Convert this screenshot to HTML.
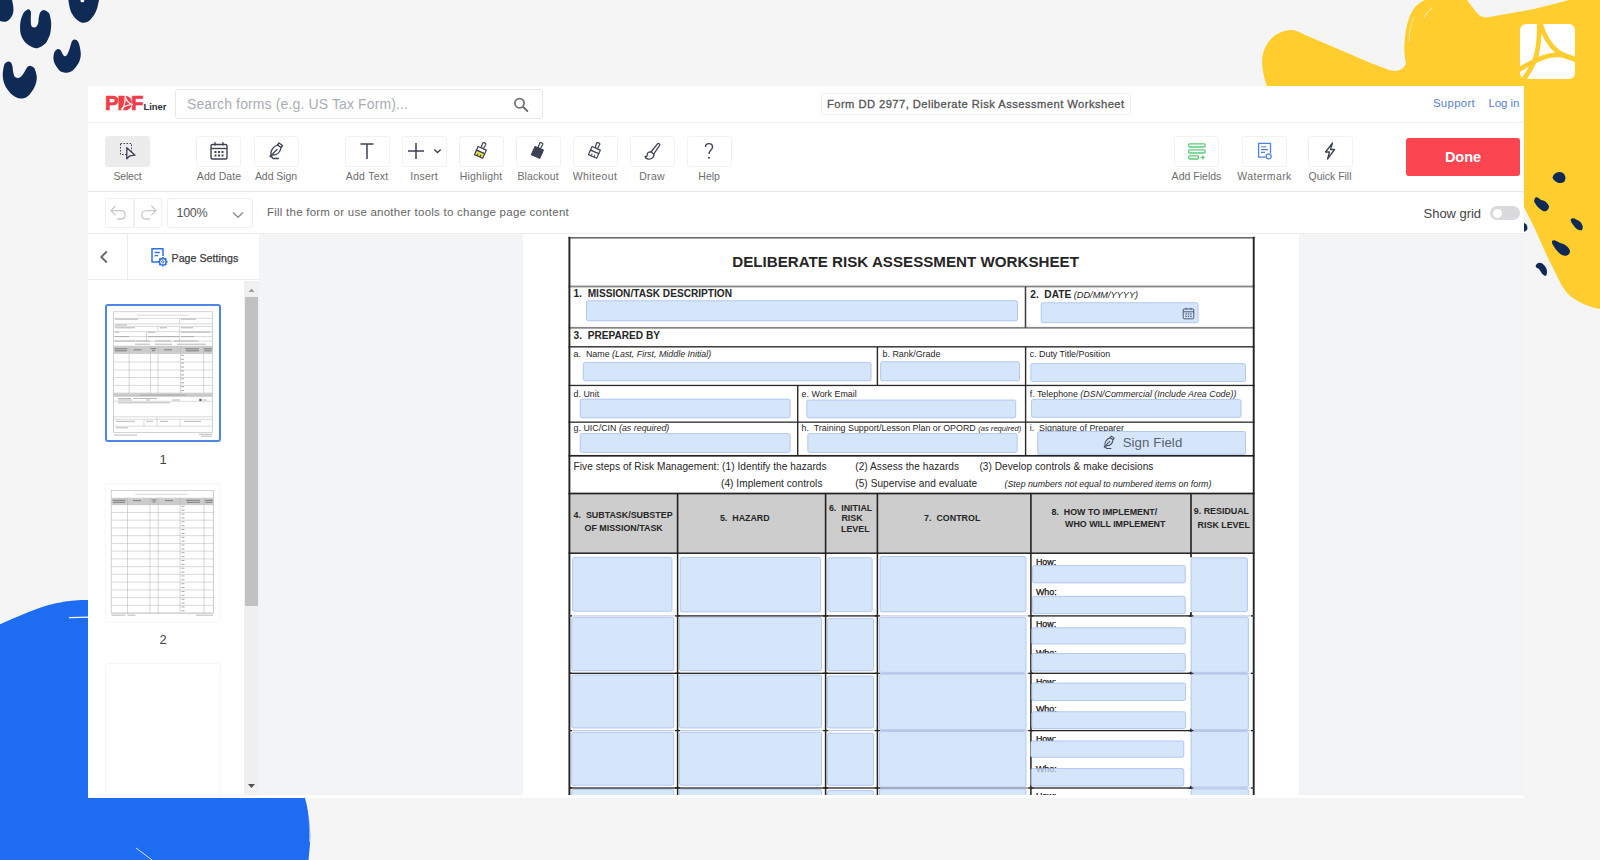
<!DOCTYPE html>
<html lang="en">
<head>
<meta charset="utf-8">
<title>Form DD 2977, Deliberate Risk Assessment Worksheet</title>
<style>
*{box-sizing:border-box;margin:0;padding:0}
html,body{width:1600px;height:860px;overflow:hidden}
body{background:#f5f5f5;font-family:"Liberation Sans",sans-serif;position:relative;color:#555}
.abs{position:absolute}
#deco{position:absolute;left:0;top:0;width:1600px;height:860px}
#app{position:absolute;left:88px;top:86px;width:1436px;height:711.500px;background:#fff;overflow:hidden}
/* header */
#hdr{position:absolute;left:0;top:0;width:1436px;height:37px;border-bottom:1px solid #f0f0f0;background:#fff}
#search{position:absolute;left:87px;top:2.500px;width:367.500px;height:30px;border:1px solid #e9e9e9;border-radius:3px;background:#fff}
#search span{position:absolute;left:11px;top:6.500px;font-size:14px;color:#a9adb4;letter-spacing:.125px;white-space:nowrap;line-height:16px}
#title{position:absolute;left:732.500px;top:6.500px;width:310.500px;height:22px;border:1px solid #efefef;border-radius:3px;font-size:11.200px;color:#555;line-height:20.500px;text-align:center;white-space:nowrap;letter-spacing:.447px;-webkit-text-stroke:.3px #555}
.lnk{position:absolute;top:10.500px;font-size:11.500px;color:#5a7fd0;white-space:nowrap;line-height:13px}
#logo{position:absolute;left:0;top:0;width:88px;height:38px}
#logo .pdf{position:absolute;left:17px;top:5.800px;font-size:20.500px;font-weight:bold;color:#ee3e4a;letter-spacing:-1.200px;line-height:22px;-webkit-text-stroke:.7px #ee3e4a}
#logo .dfill{position:absolute;left:32px;top:12px;width:10.500px;height:11px;background:#ee3e4a;border-radius:0 6px 6px 0}
#logo .liner{position:absolute;left:55.500px;top:14.500px;font-size:9.500px;font-weight:bold;color:#2e3240;line-height:12px;letter-spacing:-.1px}
/* toolbar */
#tb{position:absolute;left:0;top:37px;width:1436px;height:69px;border-bottom:1px solid #e8e8e8;background:#fff}
.btn{position:absolute;top:12.500px;width:45px;height:31px;border:1px solid #f2f2f2;border-radius:3px;background:#fff}
.btn.sel{background:#ececed;border-color:#ececed}
.btn svg{position:absolute;left:50%;top:50%;transform:translate(-50%,-50%)}
.lbl{position:absolute;top:47px;width:80px;margin-left:-40px;text-align:center;font-size:10.500px;color:#6d6d6d;white-space:nowrap;letter-spacing:-.12px;line-height:13px}
#done{position:absolute;left:1318px;top:15.400px;width:114px;height:38px;background:#fb4551;border-radius:3px;color:#fff;font-weight:bold;font-size:14.500px;text-align:center;line-height:38px}
/* row3 */
#r3{position:absolute;left:0;top:106px;width:1436px;height:42px;background:#fff;border-bottom:1px solid #ededed}
.ub{position:absolute;top:6px;height:30px;border:1px solid #efefef;background:#fff}
/* body */
#main{position:absolute;left:0;top:148px;width:1436px;height:560.500px;background:#f3f4f6}
#side{position:absolute;left:0;top:0;width:171px;height:560.500px;background:#fff}
#page{position:absolute;left:435px;top:0;width:776px;height:560.500px;background:#fff}
#page{overflow:hidden}
.ln{position:absolute}
.fld{position:absolute;background:rgba(200,222,250,.76);border:1px solid rgba(150,175,232,.62);border-radius:2px}
.t{position:absolute;white-space:nowrap;color:#262626;line-height:0;transform:translateY(-.3465em);font-family:"Liberation Sans",sans-serif}
.t.b{font-weight:bold}
.t i{font-style:italic}
.t.hw{color:#111;-webkit-text-stroke:.25px #111}
.sf{position:absolute;left:85.500px;top:3px;font-size:13.200px;color:#5a6270;letter-spacing:.1px;line-height:17px;white-space:nowrap}
.pn{width:116px;text-align:center;font-size:13px;color:#444;line-height:15px}
#side{overflow:hidden}
</style>
</head>
<body>
<svg id="deco" viewBox="0 0 1600 860">
  <!-- yellow blob -->
  <path fill="#ffcd2d" d="M1267.500 87 C1264 79 1261.500 68 1262.300 58 C1262.800 53 1264.300 49 1266 46 C1272 35 1281 31 1290 30 C1296 30 1299 32 1303 34 L1338 49 L1373 64 C1382 67 1388 70 1394 71 C1400 71 1405 68 1406 63 C1404 54 1404 46 1405 38 C1406 28 1408 18 1413 10 C1416 5 1420 2 1425 0 L1467 0 C1470 4 1473 8 1476 12 C1479 15 1481 17 1485 17.5 C1489 17.5 1500 15 1512 13 L1534 9 C1546 6 1558 3 1569 0 L1600 0 L1600 309 C1590 307 1580 303 1573 298 C1567 294 1564 289 1561 284 L1547 256 L1535 229 L1524 207 L1524 87 Z"/>
  <path fill="none" stroke="#fff" stroke-width="1" stroke-linecap="round" opacity=".8" d="M1424 17 C1427 13 1429 10 1432 8"/>
  <path fill="none" stroke="#fff" stroke-width=".8" stroke-linecap="round" opacity=".6" d="M1409 42 C1409 32 1411 24 1414 17"/>
  <!-- logo -->
  <rect x="1520" y="24" width="55" height="55" rx="6" fill="#fff"/>
  <g fill="none" stroke="#ffcd2d" stroke-width="4.700">
    <path d="M1539.300 22 C1539.500 40 1538.500 52 1534 62 C1531 69 1527 75 1522 82"/>
    <path d="M1539.800 22 C1544 36 1550 46 1558 52 C1564 56 1570 58 1578 60"/>
    <path d="M1518 70.500 C1527 64.500 1538 58.500 1550 55.500 C1560 53.500 1568 55.500 1578 61"/>
  </g>
  <!-- navy dots right -->
  <g fill="#0f2a54">
    <path d="M1553 176 C1555 172 1560 171 1563 173 C1566 175 1566 180 1564 182 C1561 184 1557 183 1555 181 C1553 179 1552 178 1553 176 Z"/>
    <path d="M1535 198 C1537 196 1539 198 1541 200 C1544 200 1547 202 1549 206 C1549 210 1546 212 1543 211 C1539 209 1535 204 1534 201 Z"/>
    <path d="M1571 219 C1573 217 1576 219 1579 221 C1582 223 1584 227 1582 230 C1579 231 1576 229 1574 226 C1572 223 1570 221 1571 219 Z"/>
    <path d="M1552 241 C1554 239 1557 241 1560 243 C1565 244 1569 247 1570 251 C1570 255 1566 257 1562 255 C1558 253 1553 246 1552 243 Z"/>
    <path d="M1536 265 C1538 262 1541 262 1544 265 C1547 268 1548 272 1546 276 C1543 276 1541 272 1539 269 C1537 268 1535 267 1536 265 Z"/>
    <path d="M1524 223 C1527 224 1528 227 1527 230 L1524 232 Z"/>
  </g>
  <!-- navy U shapes top-left -->
  <g fill="#0f2a54">
    <path d="M-6.0 -6.0 C-3.1 -10.2 8.5 -7.0 11.5 -6.0 C14.5 -5.0 11.8 -2.3 12.1 0.0 C12.4 2.3 13.3 5.4 13.4 7.7 C13.5 10.0 13.4 12.1 12.8 14.0 C12.2 15.9 10.9 17.9 9.6 19.2 C8.3 20.5 6.7 21.4 5.1 21.7 C3.5 22.0 1.8 21.6 0.0 21.1 C-1.8 20.7 -5.0 23.5 -6.0 19.0 C-7.0 14.5 -8.9 -1.8 -6.0 -6.0 Z"/>
    <path d="M27.5 9.6 C26.3 10.2 24.2 11.8 23.0 14.0 C21.8 16.2 20.7 19.8 20.3 23.0 C19.9 26.2 20.0 30.2 20.5 33.0 C21.0 35.8 22.2 38.0 23.5 40.0 C24.8 42.0 26.4 43.5 28.0 44.8 C29.6 46.0 31.3 47.0 33.0 47.5 C34.7 48.0 35.9 48.7 38.0 48.0 C40.1 47.3 43.6 45.3 45.4 43.5 C47.2 41.7 48.1 38.9 49.0 37.0 C49.9 35.1 50.1 34.3 50.5 32.0 C50.9 29.7 51.3 25.7 51.2 23.0 C51.1 20.3 50.4 17.7 50.0 16.0 C49.6 14.3 49.6 13.8 48.6 12.8 C47.6 11.8 45.4 10.2 44.1 10.0 C42.8 9.8 41.8 10.8 41.0 11.5 C40.2 12.2 40.0 12.8 39.6 14.0 C39.2 15.2 38.8 17.5 38.6 19.0 C38.4 20.5 38.6 21.8 38.2 23.0 C37.9 24.2 37.1 25.8 36.5 26.5 C35.9 27.2 35.2 27.4 34.5 27.5 C33.8 27.6 32.6 27.4 32.0 26.8 C31.4 26.2 31.2 25.5 31.0 24.0 C30.8 22.5 30.8 19.9 30.8 18.0 C30.8 16.1 31.1 14.1 31.0 12.8 C30.9 11.5 30.6 10.7 30.0 10.2 C29.4 9.7 28.7 9.0 27.5 9.6 Z"/>
    <path d="M69.0 -6.0 C67.3 -3.7 69.0 4.0 69.7 7.7 C70.5 11.4 71.9 13.7 73.5 16.0 C75.1 18.3 77.6 20.4 79.3 21.5 C81.0 22.6 82.1 23.0 83.8 22.8 C85.5 22.6 87.6 22.2 89.5 20.5 C91.4 18.8 93.8 15.6 95.3 12.8 C96.8 10.0 97.7 6.9 98.2 3.8 C98.7 0.7 100.8 -4.4 98.5 -6.0 C96.2 -7.6 86.9 -7.2 84.5 -6.0 C82.1 -4.8 84.5 -0.4 84.2 1.0 C83.9 2.4 83.1 2.2 82.5 2.2 C81.9 2.2 80.9 2.4 80.5 1.0 C80.1 -0.4 81.9 -4.8 80.0 -6.0 C78.1 -7.2 70.7 -8.3 69.0 -6.0 Z"/>
    <path d="M57.5 49.2 C56.7 49.5 55.5 50.3 54.8 51.5 C54.1 52.7 53.6 54.4 53.5 56.3 C53.4 58.2 53.4 60.5 54.3 62.7 C55.2 64.9 57.5 68.2 58.8 69.7 C60.1 71.2 60.7 71.5 62.0 72.0 C63.3 72.5 65.2 72.8 66.5 72.8 C67.8 72.8 68.7 72.6 70.0 72.0 C71.3 71.4 72.7 70.8 74.2 69.0 C75.8 67.2 78.2 63.9 79.3 61.4 C80.4 58.9 80.8 56.5 80.8 53.7 C80.8 50.9 79.8 46.9 79.3 44.8 C78.8 42.7 78.2 41.9 77.5 41.0 C76.8 40.1 75.6 39.7 74.8 39.6 C74.0 39.5 73.1 39.9 72.5 40.5 C71.9 41.1 71.8 41.6 71.3 43.0 C70.8 44.4 70.2 46.9 69.7 48.6 C69.2 50.3 68.5 51.9 68.0 53.0 C67.5 54.1 67.1 55.0 66.5 55.5 C65.9 56.0 65.2 56.5 64.6 56.3 C64.0 56.1 63.3 55.3 62.8 54.5 C62.3 53.7 61.9 52.3 61.4 51.5 C60.9 50.7 60.4 50.0 59.8 49.6 C59.1 49.2 58.3 48.9 57.5 49.2 Z"/>
    <path d="M8.3 61.4 C7.4 61.5 6.2 62.1 5.5 63.0 C4.8 63.9 4.2 64.2 3.8 66.5 C3.3 68.8 2.5 73.3 2.8 76.7 C3.1 80.1 4.1 83.9 5.8 87.0 C7.5 90.1 10.4 93.4 12.8 95.3 C15.2 97.2 17.9 98.4 20.5 98.5 C23.1 98.6 25.8 97.8 28.1 95.9 C30.4 94.0 33.0 90.0 34.5 87.0 C36.0 84.0 36.7 80.8 36.8 78.0 C36.9 75.2 35.8 72.1 35.2 70.3 C34.7 68.5 34.2 68.0 33.5 67.3 C32.8 66.6 31.5 66.1 30.7 65.9 C29.9 65.7 29.1 66.0 28.5 66.3 C27.9 66.6 27.8 66.5 26.9 67.8 C26.0 69.1 24.1 72.7 23.0 74.2 C21.9 75.7 21.4 76.4 20.5 77.0 C19.6 77.6 18.7 78.0 17.9 78.0 C17.1 78.0 16.1 77.7 15.5 77.3 C14.9 76.9 14.5 76.5 14.1 75.4 C13.7 74.4 13.3 72.5 13.0 71.0 C12.7 69.5 12.8 67.9 12.5 66.5 C12.2 65.1 11.6 63.4 10.9 62.5 C10.2 61.6 9.2 61.3 8.3 61.4 Z"/>
  </g>
  <!-- blue blob bottom-left -->
  <path fill="#1d6cf2" d="M0 624.200 C6 621.700 12 619 18.600 616.300 C25 613.600 31 611 37.200 608.800 C43 606.600 49 604.700 55.800 603.300 C62 602 68 601 74.400 600.500 C79 600.100 84 600 90 600 L300 600 L305 798 C309 812 311 828 310 844 L308.500 860 L0 860 Z"/>
  <path fill="none" stroke="#fff" stroke-width="1.200" stroke-linecap="round" d="M69.500 617.700 C76 617.400 82 617.200 89 617.200"/>
  <path fill="none" stroke="#fff" stroke-width=".9" opacity=".9" d="M136 848 L152 860"/>
  <path fill="none" stroke="#fff" stroke-width=".7" opacity=".7" d="M306.500 798 C309 812 310 826 309.500 842"/>
</svg>
<div id="app">
  <div id="hdr">
    <div id="logo"><div class="dfill"></div><span class="pdf">PDF</span><svg class="abs" style="left:29.500px;top:8.500px" width="18" height="17" viewBox="0 0 18 17"><g fill="none" stroke="#fff" stroke-width="1.100"><path d="M7.200 0 C7.500 5 7 10 4 16"/><path d="M7.200 2 C8.500 6 11 8.500 14.500 9.500"/><path d="M3 14.500 C6 11 10 9.500 15 9.800"/></g></svg><span class="liner">Liner</span></div>
    <div id="search"><span>Search forms (e.g. US Tax Form)...</span><svg class="abs" style="left:334px;top:4px" width="22" height="22" viewBox="0 0 22 22"><circle cx="9.500" cy="9.200" r="4.600" fill="none" stroke="#6f7378" stroke-width="1.800"/><path d="M13 12.700 L17.300 17" stroke="#6f7378" stroke-width="2" stroke-linecap="round"/></svg></div>
    <div id="title">Form DD 2977, Deliberate Risk Assessment Worksheet</div>
    <span class="lnk" style="left:1344.900px;letter-spacing:.27px">Support</span>
    <span class="lnk" style="left:1400.400px;letter-spacing:-.05px">Log in</span>
  </div>
  <div id="tb">
    <div class="btn sel" style="left:17px"><svg width="22" height="22" viewBox="0 0 22 22"><rect x="3.500" y="3.500" width="11" height="11" fill="none" stroke="#3d4254" stroke-width="1" stroke-dasharray="1.500 1.500"/><path d="M9.800 7.800 L9.800 18.800 L12.800 15.800 L18 15.200 Z" fill="#ececed" stroke="#3d4254" stroke-width="1.300" stroke-linejoin="round"/></svg></div><div class="lbl" style="left:39.5px;letter-spacing:-0.198px">Select</div>
    <div class="btn " style="left:108px"><svg width="20" height="20" viewBox="0 0 20 20"><rect x="2" y="3.500" width="16" height="14.500" rx="1.500" fill="none" stroke="#3d4254" stroke-width="1.400"/><path d="M2 7.500 H18" stroke="#3d4254" stroke-width="1.400"/><path d="M6 1.800 V4 M14 1.800 V4" stroke="#3d4254" stroke-width="1.400" stroke-linecap="round"/><g fill="#3d4254"><rect x="5.500" y="10" width="2" height="2"/><rect x="9" y="10" width="2" height="2"/><rect x="12.500" y="10" width="2" height="2"/><rect x="5.500" y="13.500" width="2" height="2"/><rect x="9" y="13.500" width="2" height="2"/><rect x="12.500" y="13.500" width="2" height="2"/></g></svg></div><div class="lbl" style="left:131.0px;letter-spacing:0.074px">Add Date</div>
    <div class="btn " style="left:165.5px"><svg width="20" height="20" viewBox="0 0 20 20"><g fill="none" stroke="#3d4254" stroke-width="1.300" stroke-linecap="round" stroke-linejoin="round"><path d="M5 14.500 C4 10 7 5.500 11.500 4 L15 6.500 C14.500 11 11 14 6.500 14.200"/><path d="M11.500 4 L13 2 L16.500 4.500 L15 6.500"/><path d="M4 15.500 L11 8.500"/><path d="M4.500 15.500 C6 15.500 6.500 16.500 7 17.500 L12.500 17.500"/></g></svg></div><div class="lbl" style="left:188.0px;letter-spacing:-0.061px">Add Sign</div>
    <div class="btn " style="left:256.6px"><svg width="20" height="20" viewBox="0 0 20 20"><path d="M3.500 3 H16.500 M10 3 V18" fill="none" stroke="#3d4254" stroke-width="1.500"/></svg></div><div class="lbl" style="left:279.1px;letter-spacing:0.275px">Add Text</div>
    <div class="btn " style="left:313.6px"><svg width="36" height="20" viewBox="0 0 36 20"><path d="M2 10 H18 M10 2 V18" fill="none" stroke="#3d4254" stroke-width="1.500"/><path d="M28.300 8.500 L31.500 11.500 L34.700 8.500" fill="none" stroke="#3d4254" stroke-width="1.400"/></svg></div><div class="lbl" style="left:336.1px;letter-spacing:0.247px">Insert</div>
    <div class="btn " style="left:370.6px"><svg width="20" height="20" viewBox="0 0 20 20"><g transform="rotate(24 10 10)"><path d="M8.300 1.800 C8.300 0.900 11.700 0.900 11.700 1.800 L11.300 7 H8.700 Z" fill="#fff" stroke="#3d4254" stroke-width="1.200" stroke-linejoin="round"/><path d="M5.500 7 H14.500 V11 H5.500 Z" fill="#fff" stroke="#3d4254" stroke-width="1.200" stroke-linejoin="round"/><path d="M5.500 11 H14.500 V16 H5.500 Z" fill="#e4e04a" stroke="#3d4254" stroke-width="1.200" stroke-linejoin="round"/><path d="M8.500 16 V13.500 M11.500 16 V13.500" stroke="#3d4254" stroke-width="1"/></g></svg></div><div class="lbl" style="left:393.1px;letter-spacing:0.218px">Highlight</div>
    <div class="btn " style="left:427.6px"><svg width="20" height="20" viewBox="0 0 20 20"><g transform="rotate(24 10 10)"><path d="M8.300 1.800 C8.300 0.900 11.700 0.900 11.700 1.800 L11.300 7 H8.700 Z" fill="#fff" stroke="#3d4254" stroke-width="1.200" stroke-linejoin="round"/><path d="M5.500 7 H14.500 V11 H5.500 Z" fill="#3d4254" stroke="#3d4254" stroke-width="1.200" stroke-linejoin="round"/><path d="M5.500 11 H14.500 V16 H5.500 Z" fill="#3d4254" stroke="#3d4254" stroke-width="1.200" stroke-linejoin="round"/></g></svg></div><div class="lbl" style="left:450.1px;letter-spacing:0.138px">Blackout</div>
    <div class="btn " style="left:484.6px"><svg width="20" height="20" viewBox="0 0 20 20"><g transform="rotate(24 10 10)"><path d="M8.300 1.800 C8.300 0.900 11.700 0.900 11.700 1.800 L11.300 7 H8.700 Z" fill="#fff" stroke="#3d4254" stroke-width="1.200" stroke-linejoin="round"/><path d="M5.500 7 H14.500 V11 H5.500 Z" fill="#fff" stroke="#3d4254" stroke-width="1.200" stroke-linejoin="round"/><path d="M5.500 11 H14.500 V16 H5.500 Z" fill="#fff" stroke="#3d4254" stroke-width="1.200" stroke-linejoin="round"/><path d="M8.500 16 V13.500 M11.500 16 V13.500" stroke="#3d4254" stroke-width="1"/></g></svg></div><div class="lbl" style="left:507.1px;letter-spacing:0.402px">Whiteout</div>
    <div class="btn " style="left:541.6px"><svg width="20" height="20" viewBox="0 0 20 20"><g fill="none" stroke="#3d4254" stroke-width="1.300" stroke-linecap="round" stroke-linejoin="round"><path d="M9 11 L15.500 2.800 C16.500 1.800 18.300 3 17.600 4.300 L11.800 13 "/><path d="M9 11 C7 10.500 5 12 5.200 14 C5.300 15.500 4 16 3 15.300 C3.500 18 7 19 9.500 17.500 C11.500 16.300 12.300 14.500 11.800 13 Z"/></g></svg></div><div class="lbl" style="left:564.1px;letter-spacing:0.328px">Draw</div>
    <div class="btn " style="left:598.6px"><svg width="20" height="20" viewBox="0 0 20 20"><path d="M6.500 6 C6.500 1.500 13.500 1.500 13.500 6 C13.500 9 10 9 10 13" fill="none" stroke="#3d4254" stroke-width="1.400"/><circle cx="10" cy="16.800" r="1" fill="#3d4254"/></svg></div><div class="lbl" style="left:621.1px;letter-spacing:-0.003px">Help</div>
    <div class="btn " style="left:1086px"><svg width="20" height="20" viewBox="0 0 20 20"><g fill="none" stroke="#5ec97a" stroke-width="1.300"><rect x="1.800" y="2.800" width="16.200" height="3.200" rx=".800"/><rect x="1.800" y="8.800" width="16.200" height="3.200" rx=".800"/><rect x="1.800" y="14.800" width="9.600" height="3.200" rx=".800"/><path d="M13.800 16.400 H17.800 M15.800 14.400 V18.400"/></g></svg></div><div class="lbl" style="left:1108.5px;letter-spacing:0.016px">Add Fields</div>
    <div class="btn " style="left:1154px"><svg width="20" height="20" viewBox="0 0 20 20"><g fill="none" stroke="#4f7fe0" stroke-width="1.300" stroke-linejoin="round"><path d="M10.800 16.200 H3.600 V2.400 H15.500 V12.300"/><path d="M6 5.800 H11.500 M6 8.600 H13 M6 11.400 H10" stroke-width="1.100"/><circle cx="13.700" cy="15.300" r="2.500" fill="#fff"/></g></svg></div><div class="lbl" style="left:1176.5px;letter-spacing:0.381px">Watermark</div>
    <div class="btn " style="left:1219.5px"><svg width="20" height="20" viewBox="0 0 20 20"><path d="M12.500 2 L5.500 11 H9.500 L7.500 18 L14.500 8.500 H10.500 Z" fill="none" stroke="#3d4254" stroke-width="1.300" stroke-linejoin="round"/></svg></div><div class="lbl" style="left:1242.0px;letter-spacing:-0.030px">Quick Fill</div>
    <div id="done">Done</div>
  </div>
  <div id="r3">
    <div class="ub" style="left:17px;width:29px;border-radius:3px 0 0 3px"><svg width="27" height="28" viewBox="0 0 27 28"><path d="M9.300 7.300 L5 11.600 L9.300 15.900 M5.300 11.600 H15 C20.600 11.600 20.600 20 15 20 H11.500" fill="none" stroke="#c9c9c9" stroke-width="1.300" stroke-linecap="round" stroke-linejoin="round"/></svg></div>
    <div class="ub" style="left:46px;width:28px;border-radius:0 3px 3px 0"><svg width="26" height="28" viewBox="0 0 26 28"><path d="M16.700 7.300 L21 11.600 L16.700 15.900 M20.700 11.600 H11 C5.400 11.600 5.400 20 11 20 H14.500" fill="none" stroke="#c9c9c9" stroke-width="1.300" stroke-linecap="round" stroke-linejoin="round"/></svg></div>
    <div class="ub" style="left:78.500px;width:86px;border-radius:3px"><span style="position:absolute;left:9px;top:7px;font-size:12.500px;color:#555;letter-spacing:-.3px;line-height:14px">100%</span><svg style="position:absolute;left:64.500px;top:11.500px" width="12" height="8" viewBox="0 0 12 8"><path d="M1 1.500 L6 6.300 L11 1.500" fill="none" stroke="#8e8e8e" stroke-width="1.400"/></svg></div>
    <span class="abs" style="left:179px;top:14px;font-size:11.500px;color:#666;white-space:nowrap;letter-spacing:.24px;line-height:13px">Fill the form or use another tools to change page content</span>
    <span class="abs" style="left:1335.600px;top:13.500px;font-size:13px;color:#444;white-space:nowrap;letter-spacing:-.04px;line-height:15px">Show grid</span>
    <div class="abs" style="left:1402px;top:14px;width:30px;height:14px;border-radius:7px;background:#d9d9de"><div class="abs" style="left:3px;top:2.500px;width:9px;height:9px;border-radius:50%;background:#fff"></div></div>
  </div>
  <div id="main">
    <div id="side">
<div class="abs" style="left:0;top:0;width:171px;height:46px;border-bottom:1px solid #ececec;background:#fff"></div>
<div class="abs" style="left:39px;top:0;width:1px;height:46px;background:#ececec"></div>
<svg class="abs" style="left:10px;top:16px" width="12" height="14" viewBox="0 0 12 14"><path d="M8.800 1.500 L3.300 7 L8.800 12.500" fill="none" stroke="#686868" stroke-width="1.900"/></svg>
<svg class="abs" style="left:61px;top:12px" width="22" height="22" viewBox="0 0 22 22"><g fill="none" stroke="#2f6fe4" stroke-width="1.500" stroke-linejoin="round"><path d="M9.500 16 H3 V2.700 H14 V10"/><path d="M5.700 6.500 H10.800 M5.700 9.700 H9" stroke-width="1.300"/><circle cx="13.800" cy="15.800" r="3.300" fill="#fff"/><circle cx="13.800" cy="15.800" r="1.100" stroke-width="1"/><path d="M13.800 11 V12.400 M13.800 19.200 V20.600 M9 15.800 H10.400 M17.200 15.800 H18.600 M10.400 12.400 L11.400 13.400 M16.200 18.200 L17.200 19.200 M17.200 12.400 L16.200 13.400 M11.400 18.200 L10.400 19.200" stroke-width="1.700"/></g></svg>
<span class="abs" style="left:83.5px;top:18px;font-size:10.600px;color:#3a3a3a;white-space:nowrap;letter-spacing:.06px;line-height:13px;-webkit-text-stroke:.25px #3a3a3a">Page Settings</span>
<div class="abs" style="left:156px;top:47px;width:15px;height:513.5px;background:#f0f0f0"></div>
<div class="abs" style="left:157px;top:63px;width:13px;height:309.29999999999995px;background:#c1c1c1"></div>
<svg class="abs" style="left:159.9px;top:53.6px" width="7" height="4.500" viewBox="0 0 7 4.500"><path d="M0 4.500 L3.500 .500 L7 4.500 Z" fill="#a0a0a0"/></svg>
<svg class="abs" style="left:159.9px;top:550.2px" width="7" height="4.500" viewBox="0 0 7 4.500"><path d="M0 0 L3.500 4 L7 0 Z" fill="#505050"/></svg>
<div class="abs" style="left:17px;top:69.5px;width:116px;height:138.500px;border:2px solid #4d86e6;border-radius:3px;background:#fff"></div>
<svg class="abs" style="left:19px;top:71px" width="112" height="135" viewBox="0 0 112 135" opacity=".85"><rect x="6.4" y="6.8" width="99.3" height="120.5" fill="none" stroke="#a8a8a8" stroke-width=".6"/><rect x="6.4" y="41.2" width="99.300" height="7.700" fill="#c4c4c4"/><rect x="6.4" y="88.3" width="99.300" height="3.500" fill="#c0c0c0"/><path d="M6.4 13.35 H105.7" stroke="#a8a8a8" stroke-width=".5"/><path d="M6.4 18.93 H105.7" stroke="#a8a8a8" stroke-width=".5"/><path d="M6.4 21.47 H105.7" stroke="#a8a8a8" stroke-width=".5"/><path d="M6.4 26.65 H105.7" stroke="#a8a8a8" stroke-width=".5"/><path d="M6.4 31.57 H105.7" stroke="#a8a8a8" stroke-width=".5"/><path d="M6.4 36.12 H105.7" stroke="#a8a8a8" stroke-width=".5"/><path d="M6.4 41.19 H105.7" stroke="#a8a8a8" stroke-width=".5"/><path d="M72.54 13.35 V18.93 M72.54 21.47 V36.12 M51.05 21.47 V26.65 M39.46 26.65 V36.12" stroke="#a8a8a8" stroke-width=".5"/><path d="M6.4 57 H105.7" stroke="#a8a8a8" stroke-width=".5"/><path d="M6.4 65 H105.7" stroke="#a8a8a8" stroke-width=".5"/><path d="M6.4 72.5 H105.7" stroke="#a8a8a8" stroke-width=".5"/><path d="M6.4 80.4 H105.7" stroke="#a8a8a8" stroke-width=".5"/><path d="M6.4 88 H105.7" stroke="#a8a8a8" stroke-width=".5"/><path d="M22.1 41.2 V88" stroke="#a8a8a8" stroke-width=".55"/><path d="M43.5 41.2 V88" stroke="#a8a8a8" stroke-width=".55"/><path d="M51.09 41.2 V88" stroke="#a8a8a8" stroke-width=".55"/><path d="M73.35 41.2 V88" stroke="#a8a8a8" stroke-width=".55"/><path d="M96.64 41.2 V88" stroke="#a8a8a8" stroke-width=".55"/><path d="M6.4 96.3 H105.7" stroke="#a8a8a8" stroke-width=".5"/><path d="M6.4 111.8 H105.7" stroke="#a8a8a8" stroke-width=".5"/><path d="M6.4 114.3 H105.7" stroke="#a8a8a8" stroke-width=".5"/><path d="M6.4 121.2 H105.7" stroke="#a8a8a8" stroke-width=".5"/><path d="M37 114.3 V121.2 M50 111.8 V121.2 M73 114.3 V121.2" stroke="#a8a8a8" stroke-width=".5"/><path d="M30 10.2 h52" stroke="#c2c2c2" stroke-width=".75"/><path d="M8 14.2 h23" stroke="#8d8d8d" stroke-width=".75"/><path d="M74 14.2 h15" stroke="#8d8d8d" stroke-width=".75"/><path d="M8 20 h12" stroke="#8d8d8d" stroke-width=".75"/><path d="M8 22.8 h20" stroke="#8d8d8d" stroke-width=".75"/><path d="M53 22.8 h7" stroke="#8d8d8d" stroke-width=".75"/><path d="M74 22.8 h12" stroke="#8d8d8d" stroke-width=".75"/><path d="M8 27.2 h4" stroke="#8d8d8d" stroke-width=".75"/><path d="M41 27.2 h7" stroke="#8d8d8d" stroke-width=".75"/><path d="M74 27.2 h29" stroke="#8d8d8d" stroke-width=".75"/><path d="M8 31.6 h14" stroke="#8d8d8d" stroke-width=".75"/><path d="M41 31.6 h31" stroke="#8d8d8d" stroke-width=".75"/><path d="M74 31.6 h13" stroke="#8d8d8d" stroke-width=".75"/><path d="M7.5 36 h21" stroke="#8d8d8d" stroke-width=".75"/><path d="M29 36 h14" stroke="#8d8d8d" stroke-width=".75"/><path d="M48 36 h16" stroke="#8d8d8d" stroke-width=".75"/><path d="M67 36 h24" stroke="#8d8d8d" stroke-width=".75"/><path d="M28 39.2 h15" stroke="#8d8d8d" stroke-width=".75"/><path d="M48 39.2 h17" stroke="#8d8d8d" stroke-width=".75"/><path d="M70 39.2 h29" stroke="#8d8d8d" stroke-width=".75"/><path d="M7.5 43.8 h13" stroke="#555" stroke-width=".85"/><path d="M8 45.8 h12" stroke="#555" stroke-width=".85"/><path d="M26.5 44.8 h8" stroke="#555" stroke-width=".85"/><path d="M44 43.6 h5" stroke="#555" stroke-width=".85"/><path d="M45 45.6 h3" stroke="#555" stroke-width=".85"/><path d="M57 44.8 h8" stroke="#555" stroke-width=".85"/><path d="M78 43.8 h14" stroke="#555" stroke-width=".85"/><path d="M79 45.8 h13" stroke="#555" stroke-width=".85"/><path d="M97 43.8 h8" stroke="#555" stroke-width=".85"/><path d="M97.5 45.8 h7" stroke="#555" stroke-width=".85"/><path d="M74 50.30 h3" stroke="#777" stroke-width=".75"/><path d="M74 54.22 h3" stroke="#777" stroke-width=".75"/><path d="M74 58.14 h3" stroke="#777" stroke-width=".75"/><path d="M74 62.06 h3" stroke="#777" stroke-width=".75"/><path d="M74 65.98 h3" stroke="#777" stroke-width=".75"/><path d="M74 69.90 h3" stroke="#777" stroke-width=".75"/><path d="M74 73.82 h3" stroke="#777" stroke-width=".75"/><path d="M74 77.74 h3" stroke="#777" stroke-width=".75"/><path d="M74 81.66 h3" stroke="#777" stroke-width=".75"/><path d="M74 85.58 h3" stroke="#777" stroke-width=".75"/><path d="M33 90 h46" stroke="#8a8a8a" stroke-width=".7"/><path d="M11 93.5 h13" stroke="#8d8d8d" stroke-width=".7"/><path d="M26 93.5 h24" stroke="#8d8d8d" stroke-width=".7"/><path d="M11 95 h14" stroke="#8d8d8d" stroke-width=".7"/><path d="M39 95 h4" stroke="#8d8d8d" stroke-width=".7"/><path d="M65 95 h8" stroke="#8d8d8d" stroke-width=".7"/><path d="M96 95 h4" stroke="#8d8d8d" stroke-width=".7"/><path d="M11 97.8 h52" stroke="#8d8d8d" stroke-width=".7"/><rect x="92.3" y="93.8" width="2.300" height="2.300" fill="#444"/><path d="M9 116.3 h19" stroke="#8d8d8d" stroke-width=".7"/><path d="M39 116.3 h7" stroke="#8d8d8d" stroke-width=".7"/><path d="M53 116.3 h8" stroke="#8d8d8d" stroke-width=".7"/><path d="M77 116.3 h17" stroke="#8d8d8d" stroke-width=".7"/><path d="M9 122.8 h12" stroke="#8d8d8d" stroke-width=".7"/><path d="M7 130 h23" stroke="#8d8d8d" stroke-width=".7"/><path d="M92 129.3 h13" stroke="#8d8d8d" stroke-width=".7"/><path d="M94 131.2 h11" stroke="#8d8d8d" stroke-width=".7"/></svg>
<span class="abs pn" style="left:17px;top:218px">1</span>
<div class="abs" style="left:17px;top:249px;width:116px;height:139.500px;border:1px solid #f6f6f6;border-radius:3px;background:#fff"></div>
<svg class="abs" style="left:19px;top:251px" width="112" height="135" viewBox="0 0 112 135" opacity=".85"><rect x="4.2" y="5.4" width="102.4" height="122.7" fill="none" stroke="#a8a8a8" stroke-width=".6"/><path d="M28.3 9.4 h53" stroke="#c2c2c2" stroke-width=".75"/><rect x="4.2" y="12.8" width="102.400" height="6.900" fill="#c4c4c4"/><path d="M5.5 15.3 h13" stroke="#555" stroke-width=".85"/><path d="M6 17.3 h12" stroke="#555" stroke-width=".85"/><path d="M26 15.6 h8" stroke="#555" stroke-width=".85"/><path d="M44.5 15 h5" stroke="#555" stroke-width=".85"/><path d="M45.5 17 h3" stroke="#555" stroke-width=".85"/><path d="M58 15.6 h8" stroke="#555" stroke-width=".85"/><path d="M79 15.3 h14" stroke="#555" stroke-width=".85"/><path d="M80 17.3 h13" stroke="#555" stroke-width=".85"/><path d="M98 15.3 h8" stroke="#555" stroke-width=".85"/><path d="M98.5 17.3 h7" stroke="#555" stroke-width=".85"/><path d="M4.2 19.70 H106.6" stroke="#a8a8a8" stroke-width=".5"/><path d="M4.2 27.44 H106.6" stroke="#a8a8a8" stroke-width=".5"/><path d="M4.2 35.19 H106.6" stroke="#a8a8a8" stroke-width=".5"/><path d="M4.2 42.93 H106.6" stroke="#a8a8a8" stroke-width=".5"/><path d="M4.2 50.67 H106.6" stroke="#a8a8a8" stroke-width=".5"/><path d="M4.2 58.41 H106.6" stroke="#a8a8a8" stroke-width=".5"/><path d="M4.2 66.16 H106.6" stroke="#a8a8a8" stroke-width=".5"/><path d="M4.2 73.90 H106.6" stroke="#a8a8a8" stroke-width=".5"/><path d="M4.2 81.64 H106.6" stroke="#a8a8a8" stroke-width=".5"/><path d="M4.2 89.39 H106.6" stroke="#a8a8a8" stroke-width=".5"/><path d="M4.2 97.13 H106.6" stroke="#a8a8a8" stroke-width=".5"/><path d="M4.2 104.87 H106.6" stroke="#a8a8a8" stroke-width=".5"/><path d="M4.2 112.61 H106.6" stroke="#a8a8a8" stroke-width=".5"/><path d="M4.2 120.36 H106.6" stroke="#a8a8a8" stroke-width=".5"/><path d="M4.2 128.10 H106.6" stroke="#a8a8a8" stroke-width=".5"/><path d="M20.5 12.8 V128.1" stroke="#a8a8a8" stroke-width=".55"/><path d="M42.9 12.8 V128.1" stroke="#a8a8a8" stroke-width=".55"/><path d="M51.2 12.8 V128.1" stroke="#a8a8a8" stroke-width=".55"/><path d="M73 12.8 V128.1" stroke="#a8a8a8" stroke-width=".55"/><path d="M97.1 12.8 V128.1" stroke="#a8a8a8" stroke-width=".55"/><path d="M74.5 21.30 h3" stroke="#777" stroke-width=".75"/><path d="M74.5 25.17 h3" stroke="#777" stroke-width=".75"/><path d="M74.5 29.04 h3" stroke="#777" stroke-width=".75"/><path d="M74.5 32.91 h3" stroke="#777" stroke-width=".75"/><path d="M74.5 36.78 h3" stroke="#777" stroke-width=".75"/><path d="M74.5 40.65 h3" stroke="#777" stroke-width=".75"/><path d="M74.5 44.53 h3" stroke="#777" stroke-width=".75"/><path d="M74.5 48.40 h3" stroke="#777" stroke-width=".75"/><path d="M74.5 52.27 h3" stroke="#777" stroke-width=".75"/><path d="M74.5 56.14 h3" stroke="#777" stroke-width=".75"/><path d="M74.5 60.01 h3" stroke="#777" stroke-width=".75"/><path d="M74.5 63.88 h3" stroke="#777" stroke-width=".75"/><path d="M74.5 67.75 h3" stroke="#777" stroke-width=".75"/><path d="M74.5 71.62 h3" stroke="#777" stroke-width=".75"/><path d="M74.5 75.49 h3" stroke="#777" stroke-width=".75"/><path d="M74.5 79.37 h3" stroke="#777" stroke-width=".75"/><path d="M74.5 83.24 h3" stroke="#777" stroke-width=".75"/><path d="M74.5 87.11 h3" stroke="#777" stroke-width=".75"/><path d="M74.5 90.98 h3" stroke="#777" stroke-width=".75"/><path d="M74.5 94.85 h3" stroke="#777" stroke-width=".75"/><path d="M74.5 98.72 h3" stroke="#777" stroke-width=".75"/><path d="M74.5 102.59 h3" stroke="#777" stroke-width=".75"/><path d="M74.5 106.46 h3" stroke="#777" stroke-width=".75"/><path d="M74.5 110.33 h3" stroke="#777" stroke-width=".75"/><path d="M74.5 114.20 h3" stroke="#777" stroke-width=".75"/><path d="M74.5 118.08 h3" stroke="#777" stroke-width=".75"/><path d="M74.5 121.95 h3" stroke="#777" stroke-width=".75"/><path d="M74.5 125.82 h3" stroke="#777" stroke-width=".75"/><path d="M4.5 130.2 h14" stroke="#8d8d8d" stroke-width=".7"/><path d="M20.5 130.2 h8" stroke="#8d8d8d" stroke-width=".7"/><path d="M89 130.2 h17" stroke="#8d8d8d" stroke-width=".7"/></svg>
<span class="abs pn" style="left:17px;top:397.5px">2</span>
<div class="abs" style="left:17px;top:428.5px;width:116px;height:140px;border:1px solid #f6f6f6;border-radius:3px;background:#fff"></div>
</div>
    <div id="page">
<svg class="abs" style="left:0;top:0" width="776" height="570" viewBox="0 0 776 570"><rect x="46.5" y="259.5" width="684.0" height="59.5" fill="#cdcdcd"/><rect x="45.5" y="3.00" width="686.0" height="1.6" fill="#6a6a6a"/><rect x="45.5" y="51.60" width="686.0" height="1.8" fill="#858585"/><rect x="45.5" y="92.90" width="686.0" height="1.8" fill="#858585"/><rect x="45.5" y="112.05" width="686.0" height="1.5" fill="#3a3a3a"/><rect x="45.5" y="150.80" width="686.0" height="1.3" fill="#2a2a2a"/><rect x="45.5" y="187.50" width="686.0" height="1.3" fill="#2a2a2a"/><rect x="45.5" y="220.95" width="686.0" height="1.7" fill="#222"/><rect x="45.5" y="258.65" width="686.0" height="1.7" fill="#222"/><rect x="45.5" y="318.45" width="686.0" height="1.5" fill="#222"/><rect x="45.45" y="2.8" width="1.9" height="563.2" fill="#222"/><rect x="729.75" y="2.8" width="1.9" height="563.2" fill="#222"/><rect x="501.75" y="52.5" width="1.5" height="41.5" fill="#3c3c3c"/><rect x="501.90" y="112.9" width="1.4" height="108.9" fill="#2a2a2a"/><rect x="353.70" y="112.9" width="1.4" height="38.5" fill="#2a2a2a"/><rect x="274.00" y="151.4" width="1.4" height="70.4" fill="#2a2a2a"/><rect x="153.80" y="259.5" width="1.6" height="59.5" fill="#222"/><rect x="301.80" y="259.5" width="1.6" height="59.5" fill="#222"/><rect x="353.60" y="259.5" width="1.6" height="59.5" fill="#222"/><rect x="507.10" y="259.5" width="1.6" height="59.5" fill="#222"/><rect x="667.20" y="259.5" width="1.6" height="59.5" fill="#222"/><rect x="153.85" y="319" width="1.5" height="247" fill="#222"/><rect x="301.85" y="319" width="1.5" height="247" fill="#222"/><rect x="353.65" y="319" width="1.5" height="247" fill="#222"/><rect x="507.15" y="319" width="1.5" height="247" fill="#222"/><rect x="667.15" y="319" width="1.7" height="4.3" fill="#222"/><rect x="667.15" y="378.1" width="1.7" height="4.9" fill="#222"/><rect x="667.15" y="437.6" width="1.7" height="2.9" fill="#222"/><rect x="667.15" y="494.5" width="1.7" height="3.3" fill="#222"/><rect x="667.15" y="551.8" width="1.7" height="3.2" fill="#222"/><rect x="46.5" y="381.40" width="108.1" height="1.0" fill="#bcc6dc"/><rect x="154.6" y="381.25" width="148.0" height="1.3" fill="#222"/><rect x="302.6" y="381.25" width="51.8" height="1.3" fill="#222"/><rect x="354.4" y="381.40" width="153.5" height="1.0" fill="#bcc6dc"/><rect x="507.9" y="381.25" width="160.1" height="1.3" fill="#222"/><rect x="668" y="381.40" width="62.7" height="1.0" fill="#bcc6dc"/><rect x="152.1" y="381.25" width="5.0" height="1.3" fill="#222"/><rect x="300.1" y="381.25" width="5.0" height="1.3" fill="#222"/><rect x="351.9" y="381.25" width="5.0" height="1.3" fill="#222"/><rect x="505.4" y="381.25" width="5.0" height="1.3" fill="#222"/><rect x="665.5" y="381.25" width="5.0" height="1.3" fill="#222"/><rect x="46.5" y="381.25" width="2.5" height="1.3" fill="#222"/><rect x="728" y="381.25" width="2.7" height="1.3" fill="#222"/><rect x="46.5" y="438.65" width="108.1" height="1.3" fill="#222"/><rect x="154.6" y="438.65" width="148.0" height="1.3" fill="#222"/><rect x="302.6" y="438.65" width="51.8" height="1.3" fill="#222"/><rect x="354.4" y="438.80" width="153.5" height="1.0" fill="#bcc6dc"/><rect x="507.9" y="438.65" width="160.1" height="1.3" fill="#222"/><rect x="668" y="438.80" width="62.7" height="1.0" fill="#bcc6dc"/><rect x="152.1" y="438.65" width="5.0" height="1.3" fill="#222"/><rect x="300.1" y="438.65" width="5.0" height="1.3" fill="#222"/><rect x="351.9" y="438.65" width="5.0" height="1.3" fill="#222"/><rect x="505.4" y="438.65" width="5.0" height="1.3" fill="#222"/><rect x="665.5" y="438.65" width="5.0" height="1.3" fill="#222"/><rect x="46.5" y="438.65" width="2.5" height="1.3" fill="#222"/><rect x="728" y="438.65" width="2.7" height="1.3" fill="#222"/><rect x="46.5" y="496.10" width="108.1" height="1.0" fill="#bcc6dc"/><rect x="154.6" y="496.10" width="148.0" height="1.0" fill="#bcc6dc"/><rect x="302.6" y="496.10" width="51.8" height="1.0" fill="#bcc6dc"/><rect x="354.4" y="496.10" width="153.5" height="1.0" fill="#bcc6dc"/><rect x="507.9" y="495.95" width="160.1" height="1.3" fill="#222"/><rect x="668" y="496.10" width="62.7" height="1.0" fill="#bcc6dc"/><rect x="152.1" y="495.95" width="5.0" height="1.3" fill="#222"/><rect x="300.1" y="495.95" width="5.0" height="1.3" fill="#222"/><rect x="351.9" y="495.95" width="5.0" height="1.3" fill="#222"/><rect x="505.4" y="495.95" width="5.0" height="1.3" fill="#222"/><rect x="665.5" y="495.95" width="5.0" height="1.3" fill="#222"/><rect x="46.5" y="495.95" width="2.5" height="1.3" fill="#222"/><rect x="728" y="495.95" width="2.7" height="1.3" fill="#222"/><rect x="46.5" y="553.35" width="108.1" height="1.3" fill="#222"/><rect x="154.6" y="553.35" width="148.0" height="1.3" fill="#222"/><rect x="302.6" y="553.35" width="51.8" height="1.3" fill="#222"/><rect x="354.4" y="553.40" width="153.5" height="1.2" fill="#777"/><rect x="507.9" y="553.35" width="160.1" height="1.3" fill="#222"/><rect x="668" y="553.50" width="62.7" height="1.0" fill="#bcc6dc"/><rect x="152.1" y="553.35" width="5.0" height="1.3" fill="#222"/><rect x="300.1" y="553.35" width="5.0" height="1.3" fill="#222"/><rect x="351.9" y="553.35" width="5.0" height="1.3" fill="#222"/><rect x="505.4" y="553.35" width="5.0" height="1.3" fill="#222"/><rect x="665.5" y="553.35" width="5.0" height="1.3" fill="#222"/><rect x="46.5" y="553.35" width="2.5" height="1.3" fill="#222"/><rect x="728" y="553.35" width="2.7" height="1.3" fill="#222"/></svg>
<span class="t b" style="left:209.3px;top:32.8px;font-size:15.150px">DELIBERATE RISK ASSESSMENT WORKSHEET</span>
<span class="t b" style="left:50.6px;top:63.5px;font-size:10.150px">1.&nbsp; MISSION/TASK DESCRIPTION</span>
<span class="t " style="left:507.3px;top:63.5px;font-size:9.200px"><b style="font-size:10.150px">2.&nbsp; DATE</b> <i>(DD/MM/YYYY)</i></span>
<span class="t b" style="left:50.6px;top:105.8px;font-size:10.150px">3.&nbsp; PREPARED BY</span>
<span class="t " style="left:50.6px;top:122.7px;font-size:8.880px">a.&nbsp; Name <i>(Last, First, Middle Initial)</i></span>
<span class="t " style="left:359.6px;top:122.7px;font-size:8.880px">b. Rank/Grade</span>
<span class="t " style="left:506.7px;top:122.7px;font-size:8.880px">c. Duty Title/Position</span>
<span class="t " style="left:50.6px;top:162.5px;font-size:8.880px">d. Unit</span>
<span class="t " style="left:278.6px;top:162.5px;font-size:8.880px">e. Work Email</span>
<span class="t " style="left:506.7px;top:162.5px;font-size:8.880px">f. Telephone <i>(DSN/Commercial (Include Area Code))</i></span>
<span class="t " style="left:50.6px;top:196.5px;font-size:8.880px">g. UIC/CIN <i>(as required)</i></span>
<span class="t " style="left:278.6px;top:196.5px;font-size:8.880px">h.&nbsp; Training Support/Lesson Plan or OPORD <i style="font-size:7.600px">(as required)</i></span>
<span class="t " style="left:506.7px;top:196.5px;font-size:8.880px">i.&nbsp; Signature of Preparer</span>
<span class="t " style="left:50.6px;top:235.5px;font-size:10.100px;letter-spacing:.05px">Five steps of Risk Management: (1) Identify the hazards</span>
<span class="t " style="left:332.3px;top:235.5px;font-size:10.100px;letter-spacing:.05px">(2) Assess the hazards</span>
<span class="t " style="left:456.4px;top:235.5px;font-size:10.100px;letter-spacing:.05px">(3) Develop controls &amp; make decisions</span>
<span class="t " style="left:198px;top:253.2px;font-size:10.100px;letter-spacing:.05px">(4) Implement controls</span>
<span class="t " style="left:332.3px;top:253.2px;font-size:10.100px;letter-spacing:.05px">(5) Supervise and evaluate</span>
<span class="t " style="left:481.5px;top:253.2px;font-size:8.800px"><i>(Step numbers not equal to numbered items on form)</i></span>
<span class="t b" style="left:50.6px;top:284.1px;font-size:8.900px">4.&nbsp; SUBTASK/SUBSTEP</span>
<span class="t b" style="left:61.5px;top:297px;font-size:8.900px">OF MISSION/TASK</span>
<span class="t b" style="left:196.9px;top:287.2px;font-size:8.900px">5.&nbsp; HAZARD</span>
<span class="t b" style="left:305.9px;top:277.2px;font-size:8.900px">6.&nbsp; INITIAL</span>
<span class="t b" style="left:318.4px;top:287px;font-size:8.900px">RISK</span>
<span class="t b" style="left:318px;top:297.6px;font-size:8.900px">LEVEL</span>
<span class="t b" style="left:401.1px;top:287px;font-size:8.900px">7.&nbsp; CONTROL</span>
<span class="t b" style="left:528.4px;top:280.9px;font-size:8.900px">8.&nbsp; HOW TO IMPLEMENT/</span>
<span class="t b" style="left:542px;top:293px;font-size:8.900px">WHO WILL IMPLEMENT</span>
<span class="t b" style="left:670.8px;top:279.7px;font-size:8.900px">9. RESIDUAL</span>
<span class="t b" style="left:674.6px;top:293.8px;font-size:8.900px">RISK LEVEL</span>
<span class="t hw" style="left:512.9px;top:331.1px;font-size:8.880px">How:</span>
<span class="t hw" style="left:512.9px;top:361.3px;font-size:8.880px">Who:</span>
<span class="t hw" style="left:512.9px;top:393.2px;font-size:8.880px">How:</span>
<span class="t hw" style="left:512.9px;top:422.2px;font-size:8.880px">Who:</span>
<span class="t hw" style="left:512.9px;top:451.4px;font-size:8.880px">How:</span>
<span class="t hw" style="left:512.9px;top:477.9px;font-size:8.880px">Who:</span>
<span class="t hw" style="left:512.9px;top:508.4px;font-size:8.880px">How:</span>
<span class="t hw" style="left:512.9px;top:538.2px;font-size:8.880px">Who:</span>
<span class="t hw" style="left:512.9px;top:565.4px;font-size:8.880px">How:</span>
<span class="t hw" style="left:512.9px;top:596px;font-size:8.880px">Who:</span>
<svg class="abs" style="left:0;top:0" width="776" height="570" viewBox="0 0 776 570"><g fill="#fff"><rect x="514.70" y="197.50" width="207.8" height="22.8" rx="1.800"/><rect x="509.60" y="331.60" width="152.7" height="17.3" rx="1.800"/><rect x="509.60" y="362.30" width="152.7" height="17.4" rx="1.800"/><rect x="508.80" y="393.80" width="153.5" height="16.2" rx="1.800"/><rect x="508.80" y="419.50" width="153.5" height="17.6" rx="1.800"/><rect x="508.80" y="449.00" width="153.7" height="17.5" rx="1.800"/><rect x="508.80" y="477.70" width="153.7" height="16.8" rx="1.800"/><rect x="507.80" y="506.90" width="153.0" height="16.4" rx="1.800"/></g><g fill="rgba(200,222,250,.76)" stroke="rgba(150,175,232,.62)" stroke-width="1"><rect x="63.50" y="66.70" width="431" height="20.2" rx="1.800"/><rect x="518.20" y="68.70" width="156.9" height="20.0" rx="1.800"/><rect x="60.30" y="128.40" width="287.8" height="18.4" rx="1.800"/><rect x="357.60" y="127.70" width="138.9" height="19.1" rx="1.800"/><rect x="507.80" y="129.60" width="214.7" height="17.9" rx="1.800"/><rect x="57.20" y="165.10" width="209.9" height="18.8" rx="1.800"/><rect x="283.80" y="166.00" width="208.9" height="17.9" rx="1.800"/><rect x="508.50" y="165.50" width="209.6" height="17.8" rx="1.800"/><rect x="57.20" y="199.60" width="209.9" height="18.8" rx="1.800"/><rect x="284.80" y="199.60" width="209.4" height="18.8" rx="1.800"/><rect x="514.70" y="197.50" width="207.8" height="22.8" rx="1.800"/><rect x="49.70" y="323.40" width="99.3" height="53.9" rx="1.800"/><rect x="157.20" y="323.50" width="140.3" height="54.4" rx="1.800"/><rect x="304.90" y="323.70" width="44.3" height="53.9" rx="1.800"/><rect x="357.00" y="322.50" width="145.9" height="55.4" rx="1.800"/><rect x="668.00" y="323.80" width="56.4" height="53.8" rx="1.800"/><rect x="509.60" y="331.60" width="152.7" height="17.3" rx="1.800"/><rect x="509.60" y="362.30" width="152.7" height="17.4" rx="1.800"/><rect x="48.70" y="383.40" width="102.0" height="53.3" rx="1.800"/><rect x="156.50" y="383.40" width="142" height="53.3" rx="1.800"/><rect x="304.50" y="384.40" width="46" height="52.3" rx="1.800"/><rect x="356.50" y="383.40" width="146.5" height="55.0" rx="1.800"/><rect x="668.10" y="383.10" width="57.3" height="55.3" rx="1.800"/><rect x="48.70" y="441.00" width="102.0" height="53.0" rx="1.800"/><rect x="156.50" y="441.00" width="142" height="53.0" rx="1.800"/><rect x="304.50" y="442.00" width="46" height="52.0" rx="1.800"/><rect x="356.50" y="440.20" width="146.5" height="55.5" rx="1.800"/><rect x="668.10" y="440.20" width="57.3" height="55.5" rx="1.800"/><rect x="48.70" y="498.30" width="102.0" height="53.0" rx="1.800"/><rect x="156.50" y="498.30" width="142" height="53.0" rx="1.800"/><rect x="304.50" y="499.30" width="46" height="52.0" rx="1.800"/><rect x="356.50" y="497.50" width="146.5" height="55.6" rx="1.800"/><rect x="668.10" y="497.50" width="57.3" height="55.6" rx="1.800"/><rect x="48.70" y="555.50" width="102.0" height="60" rx="1.800"/><rect x="156.50" y="555.50" width="142" height="60" rx="1.800"/><rect x="304.50" y="556.50" width="46" height="59" rx="1.800"/><rect x="356.50" y="554.90" width="146.5" height="60.6" rx="1.800"/><rect x="668.10" y="554.90" width="57.3" height="60.6" rx="1.800"/><rect x="508.80" y="393.80" width="153.5" height="16.2" rx="1.800"/><rect x="508.80" y="419.50" width="153.5" height="17.6" rx="1.800"/><rect x="508.80" y="449.00" width="153.7" height="17.5" rx="1.800"/><rect x="508.80" y="477.70" width="153.7" height="16.8" rx="1.800"/><rect x="507.80" y="506.90" width="153.0" height="16.4" rx="1.800"/><rect x="507.80" y="534.50" width="153.0" height="17.5" rx="1.800"/></g></svg>
<div class="abs" style="left:517.7px;top:68.2px;width:157.9px;height:21.0px"><svg class="abs" style="right:4px;top:4.500px" width="13" height="13" viewBox="0 0 13 13"><rect x="1.200" y="2" width="10.600" height="9.800" rx="1" fill="none" stroke="#4a5872" stroke-width="1"/><path d="M1.200 4.800 H11.800 M4 .800 V2.500 M9 .800 V2.500" stroke="#4a5872" stroke-width="1"/><g fill="#4a5872"><rect x="3.400" y="6.300" width="1.400" height="1.300"/><rect x="5.800" y="6.300" width="1.400" height="1.300"/><rect x="8.200" y="6.300" width="1.400" height="1.300"/><rect x="3.400" y="8.700" width="1.400" height="1.300"/><rect x="5.800" y="8.700" width="1.400" height="1.300"/><rect x="8.200" y="8.700" width="1.400" height="1.300"/></g></svg></div>
<div class="abs" style="left:514.2px;top:197px;width:208.8px;height:23.8px"><svg class="abs" style="left:64px;top:3px" width="16" height="17" viewBox="0 0 20 20"><g fill="none" stroke="#4a5060" stroke-width="1.400" stroke-linecap="round" stroke-linejoin="round"><path d="M5 14.500 C4 10 7 5.500 11.500 4 L15 6.500 C14.500 11 11 14 6.500 14.200"/><path d="M11.500 4 L13 2 L16.500 4.500 L15 6.500"/><path d="M4 15.500 L11 8.500"/><path d="M4.500 15.500 C6 15.500 6.500 16.500 7 17.500 L12.500 17.500"/></g></svg><span class="sf">Sign Field</span></div>
</div>
  </div>
</div>
</body>
</html>
